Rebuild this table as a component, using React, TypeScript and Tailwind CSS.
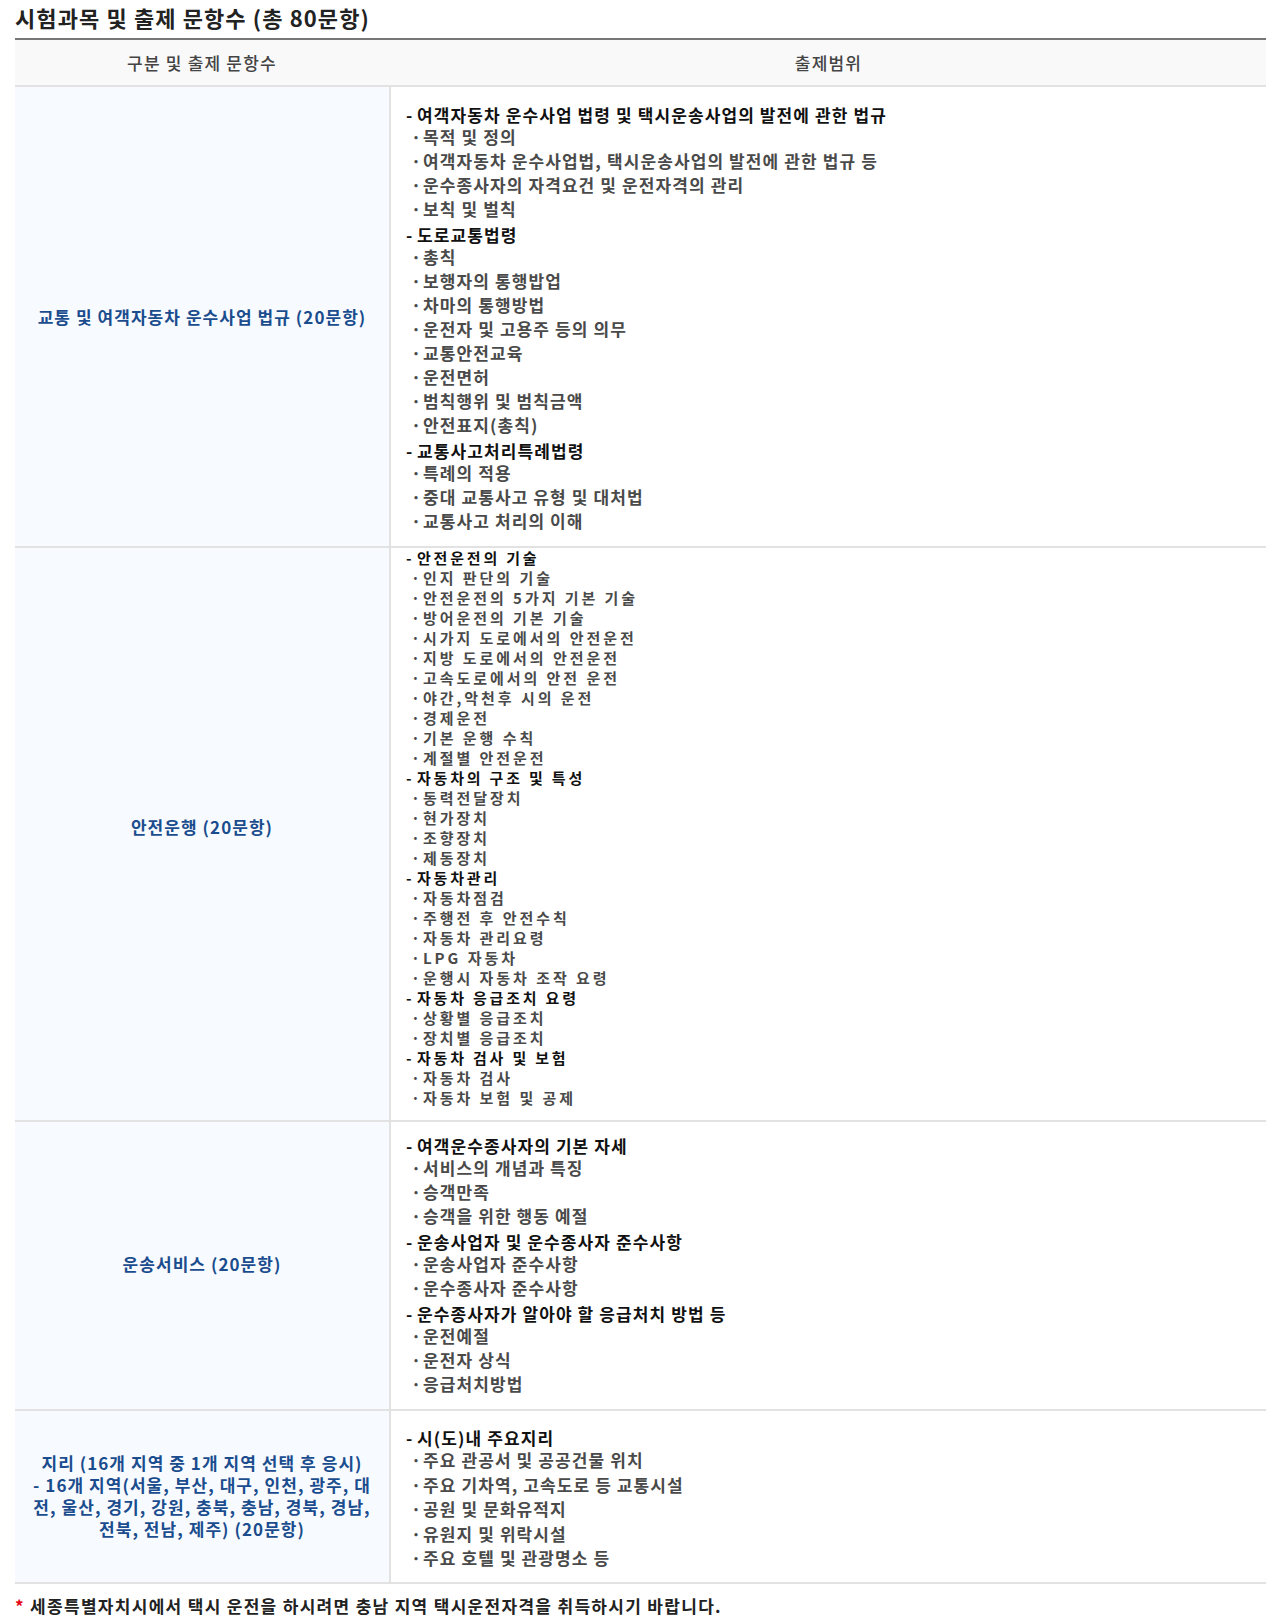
import React from "react";

type Group = { h: string; items: string[] };

const row1: Group[] = [
  {
    h: "여객자동차 운수사업 법령 및 택시운송사업의 발전에 관한 법규",
    items: [
      "목적 및 정의",
      "여객자동차 운수사업법, 택시운송사업의 발전에 관한 법규 등",
      "운수종사자의 자격요건 및 운전자격의 관리",
      "보칙 및 벌칙",
    ],
  },
  {
    h: "도로교통법령",
    items: [
      "총칙",
      "보행자의 통행밥업",
      "차마의 통행방법",
      "운전자 및 고용주 등의 의무",
      "교통안전교육",
      "운전면허",
      "범칙행위 및 범칙금액",
      "안전표지(총칙)",
    ],
  },
  {
    h: "교통사고처리특례법령",
    items: ["특례의 적용", "중대 교통사고 유형 및 대처법", "교통사고 처리의 이해"],
  },
];

const row2: Group[] = [
  {
    h: "안전운전의 기술",
    items: [
      "인지 판단의 기술",
      "안전운전의 5가지 기본 기술",
      "방어운전의 기본 기술",
      "시가지 도로에서의 안전운전",
      "지방 도로에서의 안전운전",
      "고속도로에서의 안전 운전",
      "야간,악천후 시의 운전",
      "경제운전",
      "기본 운행 수칙",
      "계절별 안전운전",
    ],
  },
  { h: "자동차의 구조 및 특성", items: ["동력전달장치", "현가장치", "조향장치", "제동장치"] },
  {
    h: "자동차관리",
    items: ["자동차점검", "주행전 후 안전수칙", "자동차 관리요령", "LPG 자동차", "운행시 자동차 조작 요령"],
  },
  { h: "자동차 응급조치 요령", items: ["상황별 응급조치", "장치별 응급조치"] },
  { h: "자동차 검사 및 보험", items: ["자동차 검사", "자동차 보험 및 공제"] },
];

const row3: Group[] = [
  { h: "여객운수종사자의 기본 자세", items: ["서비스의 개념과 특징", "승객만족", "승객을 위한 행동 예절"] },
  { h: "운송사업자 및 운수종사자 준수사항", items: ["운송사업자 준수사항", "운수종사자 준수사항"] },
  { h: "운수종사자가 알아야 할 응급처치 방법 등", items: ["운전예절", "운전자 상식", "응급처치방법"] },
];

const row4: Group[] = [
  {
    h: "시(도)내 주요지리",
    items: [
      "주요 관공서 및 공공건물 위치",
      "주요 기차역, 고속도로 등 교통시설",
      "공원 및 문화유적지",
      "유원지 및 위락시설",
      "주요 호텔 및 관광명소 등",
    ],
  },
];

function Groups({ groups, pad, lead }: { groups: Group[]; pad: string; lead: string }) {
  return (
    <div className={`${pad} pl-[15px] text-[17px] tracking-[1.1px]`}>
      {groups.map((g, i) => (
        <div key={i}>
          <div className="pt-[3px] leading-[21px] font-bold text-[#111] whitespace-nowrap">
            <span className="inline-block w-[11px] tracking-normal">-</span>
            {g.h}
          </div>
          {g.items.map((it, j) => (
            <div key={j} className={`${lead} pl-[5px] font-semibold text-[#4a4a4a] whitespace-nowrap flex`}>
              <span className="w-[12px] shrink-0 tracking-normal">·</span>
              <span>{it}</span>
            </div>
          ))}
        </div>
      ))}
    </div>
  );
}

function GroupsCompact({ groups }: { groups: Group[] }) {
  return (
    <div className="pt-0 pb-[12px] pl-[15px] text-[15px]">
      {groups.map((g, i) => (
        <div key={i}>
          <div className="leading-[20px] font-bold text-[#111] whitespace-nowrap tracking-[2.8px]">
            <span className="inline-block w-[11px] tracking-normal">-</span>
            {g.h}
          </div>
          {g.items.map((it, j) => (
            <div key={j} className="leading-[20px] pl-[5px] font-semibold text-[#4a4a4a] whitespace-nowrap flex tracking-[2.95px]">
              <span className="w-[12px] shrink-0 tracking-normal">·</span>
              <span>{it}</span>
            </div>
          ))}
        </div>
      ))}
    </div>
  );
}

function Row({ left, children, leftPad = "" }: { left: React.ReactNode; children: React.ReactNode; leftPad?: string }) {
  return (
    <div className="flex border-b-2 border-[#e2e2e2]">
      <div className={`w-[374px] shrink-0 bg-[#f7fbff] flex items-center justify-center px-[10px] ${leftPad} text-center text-[17px] tracking-[1.05px] font-bold text-[#1b4d8e] leading-[22px]`}>
        {left}
      </div>
      <div className="flex-1 border-l-2 border-[#e2e2e2] bg-white">{children}</div>
    </div>
  );
}

export default function App() {
  return (
    <div
      className="w-[1280px] min-h-[1618px] bg-white pl-[15px] pr-[14px]"
      style={{ fontFamily: '"Noto Sans CJK KR", "Noto Sans", sans-serif' }}
    >
      <h2 className="pt-[3px] text-[22px] tracking-[1.1px] leading-[28px] font-bold text-[#222] whitespace-nowrap">
        시험과목 및 출제 문항수 (총 80문항)
      </h2>
      <div className="mt-[7px] border-t-2 border-[#777]">
        <div className="flex h-[47px] bg-[#f9f9f9] border-b-2 border-[#e2e2e2] text-[17px] tracking-[1.2px] font-medium text-[#444]">
          <div className="w-[374px] shrink-0 flex items-center justify-center">구분 및 출제 문항수</div>
          <div className="flex-1 flex items-center justify-center pl-[2px]">출제범위</div>
        </div>
        <Row left={<span>교통 및 여객자동차 운수사업 법규 (20문항)</span>}>
          <Groups groups={row1} pad="pt-[14px] pb-[13px]" lead="leading-[24px]" />
        </Row>
        <Row left={<span>안전운행 (20문항)</span>} leftPad="pb-[14px]">
          <GroupsCompact groups={row2} />
        </Row>
        <Row left={<span>운송서비스 (20문항)</span>} leftPad="pb-[4px]">
          <Groups groups={row3} pad="pt-[10px] pb-[13px]" lead="leading-[24px]" />
        </Row>
        <Row
          left={
            <div className="whitespace-nowrap">
              <div>지리 (16개 지역 중 1개 지역 선택 후 응시)</div>
              <div>- 16개 지역(서울, 부산, 대구, 인천, 광주, 대</div>
              <div>전, 울산, 경기, 강원, 충북, 충남, 경북, 경남,</div>
              <div>전북, 전남, 제주) (20문항)</div>
            </div>
          }
        >
          <Groups groups={row4} pad="pt-[13px] pb-[11px]" lead="leading-[24.5px]" />
        </Row>
      </div>
      <p className="mt-[10px] text-[17px] tracking-[1.3px] leading-[24px] font-bold text-[#222] whitespace-nowrap">
        <span className="text-[#e60012]">*</span> 세종특별자치시에서 택시 운전을 하시려면 충남 지역 택시운전자격을 취득하시기 바랍니다.
      </p>
    </div>
  );
}
